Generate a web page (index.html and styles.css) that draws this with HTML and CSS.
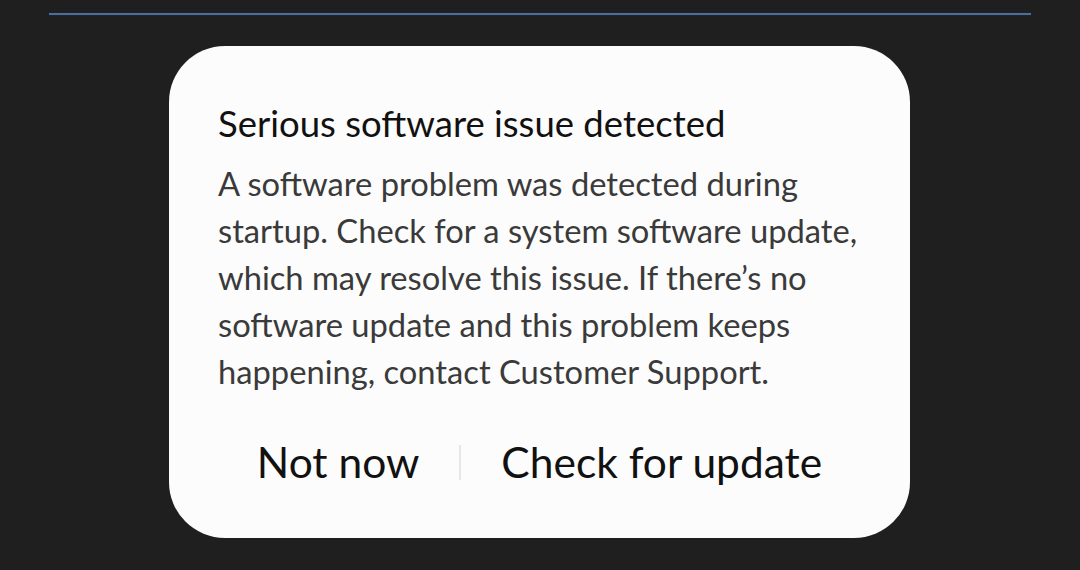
FILE: index.html
```html
<!DOCTYPE html>
<html lang="en">
<head>
    <meta charset="UTF-8">
    <meta name="viewport" content="width=device-width, initial-scale=1.0">
    <title>Serious software issue detected</title>
    <link rel="stylesheet" href="styles.css">
</head>
<body>

<div class="topbar">
    <div class="topbar-line"></div>
</div>

<!-- Diálogo de erro -->
<div class="dialog">
    <h1 class="dialog-title">Serious software issue detected</h1>
    <p class="dialog-text">A software problem was detected during startup. Check for a system software update, which may resolve this issue. If there’s no software update and this problem keeps happening, contact Customer Support.</p>

    <div class="dialog-actions">
        <button type="button" class="action">Not now</button>
        <span class="divider"></span>
        <button type="button" class="action">Check for update</button>
    </div>
</div>

</body>
</html>
```

FILE: styles.css
```css
/* Estilo Global */
body {
    font-family: Lato, 'Noto Sans', sans-serif;
    margin: 0;
    padding: 0;
    background-color: #1f1f1f;
    color: #111;
    width: 1080px;
    height: 570px;
    overflow: hidden;
}

.topbar {
    padding: 13px 49px 0;
}

.topbar-line {
    height: 2px;
    background-color: #4d6d9b;
    box-shadow: 0 0 2px rgba(30, 50, 90, 0.8);
}

/* Diálogo */
.dialog {
    box-sizing: border-box;
    width: 741px;
    height: 492px;
    margin: 31px 0 0 169px;
    padding: 57px 49px 0;
    background-color: #fcfcfc;
    border-radius: 56px;
}

.dialog-title {
    margin: 0;
    font-size: 36.5px;
    line-height: 40px;
    font-weight: 400;
    color: #111;
}

.dialog-text {
    margin: 17px 0 0;
    font-size: 32.7px;
    line-height: 47px;
    color: #3a3a3a;
}

.dialog-actions {
    display: flex;
    justify-content: center;
    align-items: center;
    gap: 40px;
    margin-top: 41px;
}

.action {
    background: none;
    border: none;
    padding: 0;
    font-family: inherit;
    font-size: 42.5px;
    line-height: 52px;
    color: #111;
    cursor: pointer;
}

.divider {
    width: 2px;
    height: 35px;
    background-color: #e6e6e6;
}
```
